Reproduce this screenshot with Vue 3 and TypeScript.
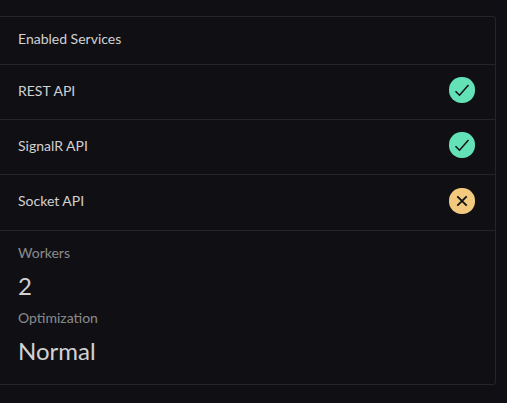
<script setup lang="ts">
interface Service { name: string; enabled: boolean }
const services: Service[] = [
  { name: 'REST API', enabled: true },
  { name: 'SignalR API', enabled: true },
  { name: 'Socket API', enabled: false },
]
const stats = [
  { label: 'Workers', value: '2' },
  { label: 'Optimization', value: 'Normal' },
]
</script>

<template>
  <div class="page">
    <section class="card">
      <header class="head">Enabled Services</header>
      <div v-for="s in services" :key="s.name" class="row">
        <span class="name">{{ s.name }}</span>
        <span class="badge" :class="s.enabled ? 'ok' : 'off'">
          <svg v-if="s.enabled" viewBox="0 0 26 26" width="26" height="26" fill="none">
            <path d="M6.5 14.2 L10.5 18.2 L19.5 8" stroke="#101014" stroke-width="1.5" />
          </svg>
          <svg v-else viewBox="0 0 26 26" width="26" height="26" fill="none">
            <path d="M8.3 8.3 L17.7 17.7 M17.7 8.3 L8.3 17.7" stroke="#101014" stroke-width="1.8" />
          </svg>
        </span>
      </div>
      <div class="stats">
        <div v-for="st in stats" :key="st.label" class="stat">
          <div class="label">{{ st.label }}</div>
          <div class="value">{{ st.value }}</div>
        </div>
      </div>
    </section>
  </div>
</template>

<style>
html, body { margin: 0; background: #101014; }
</style>

<style scoped>
.page {
  height: 403px;
  box-sizing: border-box;
  padding-top: 16px;
  overflow: hidden;
  background: #101014;
  font-family: Lato, sans-serif;
  color: rgba(255, 255, 255, 0.82);
}
.card {
  box-sizing: border-box;
  width: 506px;
  height: 369px;
  margin-left: -10px;
  border: 1px solid rgba(255, 255, 255, 0.09);
  border-radius: 3px;
  display: flex;
  flex-direction: column;
}
.head {
  box-sizing: border-box;
  height: 48px;
  padding: 0 0 4px 27px;
  display: flex;
  align-items: center;
  font-size: 14px;
  border-bottom: 1px solid rgba(255, 255, 255, 0.09);
}
.row {
  box-sizing: border-box;
  height: 55px;
  display: flex;
  align-items: center;
  justify-content: space-between;
  padding: 0 20px 4px 27px;
  font-size: 14px;
  border-bottom: 1px solid rgba(255, 255, 255, 0.09);
}
.row:nth-of-type(3) { height: 56px; }
.badge {
  width: 26px;
  height: 26px;
  border-radius: 12.4px;
  display: flex;
}
.ok { background: #63e2b7; }
.off { background: #f2c97d; }
.stats {
  padding: 12px 27px 0;
}
.label {
  font-size: 14px;
  line-height: 20px;
  color: rgba(255, 255, 255, 0.52);
}
.value {
  font-size: 24px;
  line-height: 38px;
  margin-top: 4px;
}
.stat + .stat { margin-top: 3px; }
</style>
